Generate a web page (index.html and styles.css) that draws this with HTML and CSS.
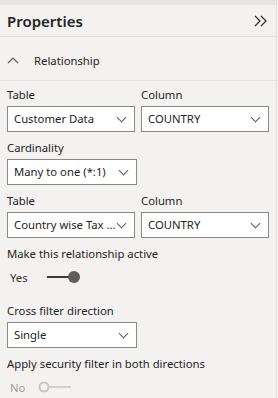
FILE: index.html
```html
<!DOCTYPE html>
<html lang="en">
<head>
    <meta charset="UTF-8">
    <title>Properties</title>
    <link rel="stylesheet" href="styles.css">
</head>
<body>
    <div class="pane">
        <div class="pane-header">
            <span class="pane-title">Properties</span>
            <svg class="collapse" width="14" height="12" viewBox="0 0 14 12">
                <path d="M1 1 L6 6 L1 11 M7 1 L12 6 L7 11" fill="none" stroke="#323130" stroke-width="1.3"/>
            </svg>
        </div>
        <div class="section-head">
            <svg class="chev-up" width="12" height="8" viewBox="0 0 12 8">
                <path d="M1 7 L6 2 L11 7" fill="none" stroke="#605e5c" stroke-width="1.2"/>
            </svg>
            <span>Relationship</span>
        </div>
        <div class="section">
            <div class="row">
                <div class="field">
                    <label>Table</label>
                    <div class="select">Customer Data<span class="arrow"></span></div>
                </div>
                <div class="field">
                    <label>Column</label>
                    <div class="select">COUNTRY<span class="arrow"></span></div>
                </div>
            </div>
            <div class="field half">
                <label>Cardinality</label>
                <div class="select">Many to one (*:1)<span class="arrow"></span></div>
            </div>
            <div class="row">
                <div class="field">
                    <label>Table</label>
                    <div class="select">Country wise Tax ...<span class="arrow"></span></div>
                </div>
                <div class="field">
                    <label>Column</label>
                    <div class="select">COUNTRY<span class="arrow"></span></div>
                </div>
            </div>
            <div class="field">
                <label>Make this relationship active</label>
                <div class="toggle on">
                    <span class="toggle-text">Yes</span>
                    <svg width="36" height="14" viewBox="0 0 36 14">
                        <line x1="1" y1="7" x2="28" y2="7" stroke="#3b3a39" stroke-width="2"/>
                        <circle cx="28" cy="7" r="6" fill="#605e5c"/>
                    </svg>
                </div>
            </div>
            <div class="field half gap-top">
                <label>Cross filter direction</label>
                <div class="select">Single<span class="arrow"></span></div>
            </div>
            <div class="field">
                <label>Apply security filter in both directions</label>
                <div class="toggle off">
                    <span class="toggle-text">No</span>
                    <svg width="36" height="14" viewBox="0 0 36 14">
                        <line x1="11" y1="7" x2="33" y2="7" stroke="#c8c6c4" stroke-width="1.5"/>
                        <circle cx="6" cy="7" r="4.5" fill="#f3f2f1" stroke="#c8c6c4" stroke-width="2"/>
                    </svg>
                </div>
            </div>
        </div>
    </div>
</body>
</html>
```

FILE: styles.css
```css
body {
    margin: 0;
    padding: 0;
    font-family: "Noto Sans", "Open Sans", sans-serif;
    color: #323130;
    background-color: #f3f2f1;
}

.pane {
    width: 277px;
    height: 398px;
    box-sizing: border-box;
    border-top: 5px solid #e6e5e3;
    border-right: 1px solid #e1dfdd;
    background-color: #f3f2f1;
    overflow: hidden;
}

.pane-header {
    display: flex;
    align-items: center;
    justify-content: space-between;
    height: 31px;
    padding: 0 8px 0 7px;
    border-bottom: 1px solid #e1dfdd;
}

.pane-title {
    font-size: 15px;
    font-weight: 600;
    color: #252423;
}

.section-head {
    display: flex;
    align-items: center;
    height: 40px;
    padding: 3px 0 0 7px;
    font-size: 11.3px;
    color: #252423;
    border-bottom: 1px solid #e1dfdd;
}

.chev-up {
    margin-right: 15px;
}

.section {
    padding: 5px 7px 0 7px;
}

.row {
    display: flex;
    gap: 6px;
}

.row .field {
    flex: 1;
}

.field {
    margin-bottom: 7px;
}

.field.half {
    width: 130px;
}

.gap-top {
    margin-top: 13px;
}

.field label {
    display: block;
    font-size: 11.3px;
    line-height: 18px;
    margin-bottom: 2px;
    color: #252423;
}

.select {
    position: relative;
    height: 26px;
    line-height: 24px;
    box-sizing: border-box;
    background-color: #fff;
    border: 1px solid #8a8886;
    padding-left: 6px;
    font-size: 11.3px;
    color: #252423;
    white-space: nowrap;
    overflow: hidden;
}

.arrow {
    position: absolute;
    right: 9px;
    top: 7px;
    width: 6px;
    height: 6px;
    border-right: 1px solid #605e5c;
    border-bottom: 1px solid #605e5c;
    transform: rotate(45deg);
}

.toggle {
    display: flex;
    align-items: center;
    height: 24px;
    padding-left: 3px;
    font-size: 11.3px;
}

.toggle-text {
    width: 36px;
}

.toggle.off .toggle-text {
    color: #a19f9d;
    width: 28px;
}
```
